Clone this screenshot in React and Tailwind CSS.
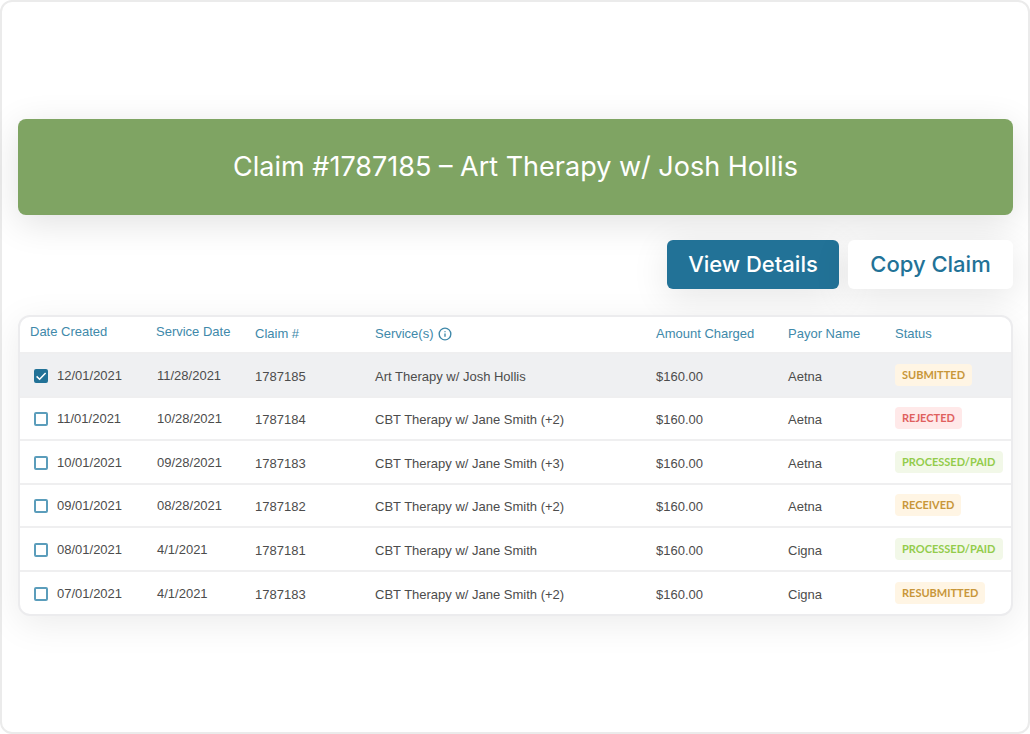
import { Info } from "lucide-react";

const STATUS_STYLES = {
  SUBMITTED: "bg-[#fff5e4] text-[#c8973a]",
  REJECTED: "bg-[#ffe9e9] text-[#e0605e]",
  "PROCESSED/PAID": "bg-[#f2f8e8] text-[#93cc4b]",
  RECEIVED: "bg-[#fff5e4] text-[#c8973a]",
  RESUBMITTED: "bg-[#fff5e4] text-[#c8973a]",
};

const CLAIMS = [
  { created: "12/01/2021", service: "11/28/2021", claim: "1787185", name: "Art Therapy w/ Josh Hollis", amount: "$160.00", payor: "Aetna", status: "SUBMITTED", selected: true },
  { created: "11/01/2021", service: "10/28/2021", claim: "1787184", name: "CBT Therapy w/ Jane Smith (+2)", amount: "$160.00", payor: "Aetna", status: "REJECTED" },
  { created: "10/01/2021", service: "09/28/2021", claim: "1787183", name: "CBT Therapy w/ Jane Smith (+3)", amount: "$160.00", payor: "Aetna", status: "PROCESSED/PAID" },
  { created: "09/01/2021", service: "08/28/2021", claim: "1787182", name: "CBT Therapy w/ Jane Smith (+2)", amount: "$160.00", payor: "Aetna", status: "RECEIVED" },
  { created: "08/01/2021", service: "4/1/2021", claim: "1787181", name: "CBT Therapy w/ Jane Smith", amount: "$160.00", payor: "Cigna", status: "PROCESSED/PAID" },
  { created: "07/01/2021", service: "4/1/2021", claim: "1787183", name: "CBT Therapy w/ Jane Smith (+2)", amount: "$160.00", payor: "Cigna", status: "RESUBMITTED" },
];

function ClaimCheckbox({ id, checked }) {
  return (
    <span className="grid h-[14px] w-[14px] shrink-0">
      <input
        id={id}
        type="checkbox"
        defaultChecked={checked}
        className="peer col-start-1 row-start-1 h-[14px] w-[14px] appearance-none rounded-xs border-2 border-[#5b9dbb] bg-white checked:border-[#227297] checked:bg-[#227297]"
      />
      <svg
        viewBox="0 0 14 14"
        aria-hidden="true"
        className="pointer-events-none invisible col-start-1 row-start-1 h-[14px] w-[14px] peer-checked:visible"
      >
        <path d="M2.6 7.4 5.6 10.2 11.6 4" fill="none" stroke="#fff" strokeWidth="1.5" />
      </svg>
    </span>
  );
}

function ClaimRow({ row, index }) {
  const id = `claim-${index}`;
  return (
    <tr className={`border-t-2 border-[#efeff0] odd:h-[44px] even:h-[43px] last:h-[42px] ${row.selected ? "bg-[#eff0f2]" : ""}`}>
      <td className="pt-[2px] pl-[14px]">
        <div className="flex items-center gap-[9px]">
          <ClaimCheckbox id={id} checked={row.selected} />
          <label htmlFor={id}>{row.created}</label>
        </div>
      </td>
      <td className="pt-[2px] pl-[11px]">{row.service}</td>
      <td className="pt-1 pl-[10px]">{row.claim}</td>
      <td className="pt-1 pl-[10px]">{row.name}</td>
      <td className="pt-1 pl-[10px]">{row.amount}</td>
      <td className="pt-1 pl-[10px]">{row.payor}</td>
      <td className="pl-[10px]">
        <span className={`inline-block rounded-sm px-[7px] font-['Lato',sans-serif] text-[11px] leading-[22px] font-bold ${STATUS_STYLES[row.status]}`}>
          {row.status}
        </span>
      </td>
    </tr>
  );
}

export default function App() {
  return (
    <main className="flex min-h-screen flex-col justify-center rounded-xl border-2 border-[#ebebeb] bg-white pr-[15px] pl-4 font-['Liberation_Sans',Arial,sans-serif]">
      <h1 className="rounded-lg bg-[#7fa463] px-4 py-[30px] text-center font-['Inter',sans-serif] text-[27px] leading-9 font-normal text-white shadow-[0_8px_36px_rgba(0,0,0,0.12)]">
        Claim #1787185 – Art Therapy w/ Josh Hollis
      </h1>
      <div className="mt-[25px] flex justify-end gap-[9px] font-['Inter',sans-serif] text-[22px] leading-[49px] font-medium">
        <button type="button" className="w-[172px] rounded-md bg-[#227297] text-white shadow-[0_8px_36px_rgba(0,0,0,0.1)]">
          View Details
        </button>
        <button type="button" className="w-[165px] rounded-md bg-white text-[#227297] shadow-[0_8px_36px_rgba(0,0,0,0.1)]">
          Copy Claim
        </button>
      </div>
      <div className="mt-[26px] overflow-hidden rounded-xl border-2 border-[#ececee] bg-white shadow-[0_8px_36px_rgba(0,0,0,0.08)]">
        <table className="w-full table-fixed border-collapse text-left text-[13px] leading-4 whitespace-nowrap text-[#4c4c4c]">
          <colgroup>
            <col className="w-[126px]" />
            <col className="w-[99px]" />
            <col className="w-[120px]" />
            <col />
            <col className="w-[132px]" />
            <col className="w-[107px]" />
            <col className="w-[126px]" />
          </colgroup>
          <thead>
            <tr className="h-[36px] text-[#4089aa]">
              <th scope="col" className="pl-[10px] pb-1 font-normal">Date Created</th>
              <th scope="col" className="pl-[10px] pb-1 font-normal">Service Date</th>
              <th scope="col" className="pl-[10px] font-normal">Claim #</th>
              <th scope="col" className="pl-[10px] font-normal">
                <span className="flex items-center gap-1">
                  Service(s)
                  <Info size={14} strokeWidth={2.4} aria-hidden="true" />
                </span>
              </th>
              <th scope="col" className="pl-[10px] font-normal">Amount Charged</th>
              <th scope="col" className="pl-[10px] font-normal">Payor Name</th>
              <th scope="col" className="pl-[10px] font-normal">Status</th>
            </tr>
          </thead>
          <tbody>
            {CLAIMS.map((row, index) => (
              <ClaimRow key={index} row={row} index={index} />
            ))}
          </tbody>
        </table>
      </div>
    </main>
  );
}
